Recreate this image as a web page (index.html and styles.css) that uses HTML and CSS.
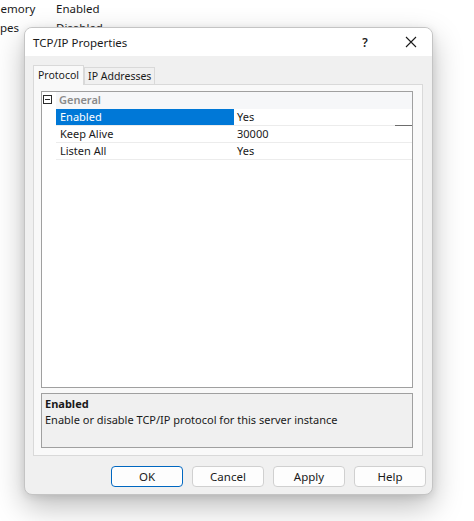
FILE: index.html
```html
<!DOCTYPE html>
<html>
<head>
<meta charset="utf-8">
<link rel="stylesheet" href="styles.css">
</head>
<body>
<div class="desktop">
  <div class="bg-row"><span class="bg-name">Memory</span><span class="bg-val">Enabled</span></div>
  <div class="bg-row"><span class="bg-name">Pipes</span><span class="bg-val">Disabled</span></div>
</div>

<div class="dialog">
  <div class="titlebar">
    <span class="title">TCP/IP Properties</span>
    <span class="tb-help">?</span>
    <span class="tb-close">
      <svg width="12" height="12" viewBox="0 0 12 12"><path d="M1 1 L11 11 M11 1 L1 11" stroke="#1a1a1a" stroke-width="1.1" fill="none"/></svg>
    </span>
  </div>
  <div class="body">
    <div class="tabs">
      <div class="tab active">Protocol</div>
      <div class="tab">IP Addresses</div>
    </div>
    <div class="panel">
      <div class="grid">
        <div class="row cat">
          <div class="margin"><span class="toggle"></span></div>
          <div class="cat-name">General</div>
        </div>
        <div class="row prop selected">
          <div class="margin"></div>
          <div class="pname">Enabled</div>
          <div class="pval">Yes</div>
        </div>
        <div class="row prop">
          <div class="margin"></div>
          <div class="pname">Keep Alive</div>
          <div class="pval">30000</div>
        </div>
        <div class="row prop">
          <div class="margin"></div>
          <div class="pname">Listen All</div>
          <div class="pval">Yes</div>
        </div>
        <div class="stray-line"></div>
      </div>
      <div class="desc">
        <div class="desc-title">Enabled</div>
        <div class="desc-text">Enable or disable TCP/IP protocol for this server instance</div>
      </div>
    </div>
    <div class="buttons">
      <button class="btn default">OK</button>
      <button class="btn">Cancel</button>
      <button class="btn">Apply</button>
      <button class="btn">Help</button>
    </div>
  </div>
</div>
</body>
</html>
```

FILE: styles.css
```css
html, body {
  margin: 0;
  padding: 0;
}
body {
  width: 474px;
  height: 521px;
  overflow: hidden;
  background: #ffffff;
  font-family: "Noto Sans", "Open Sans", sans-serif;
  font-size: 11px;
  color: #1a1a1a;
  position: relative;
}
.bg-row {
  display: flex;
  height: 19px;
  line-height: 17px;
  font-size: 11.5px;
}
.bg-name {
  width: 66px;
  margin-left: -10px;
}
.bg-val {
  flex: none;
}
.dialog {
  position: absolute;
  left: 24px;
  top: 27px;
  width: 409px;
  height: 468px;
  box-sizing: border-box;
  border: 1px solid #c4c4c4;
  border-radius: 8px;
  background: #f0f0f0;
  box-shadow: 0 12px 30px rgba(0, 0, 0, 0.26), 0 2px 8px rgba(0, 0, 0, 0.10);
  display: flex;
  flex-direction: column;
  overflow: hidden;
}
.titlebar {
  height: 28px;
  background: #ffffff;
  display: flex;
  align-items: center;
  padding-left: 8px;
  flex: none;
}
.title {
  flex: 1;
  font-size: 11.5px;
  color: #1a1a1a;
}
.tb-help {
  width: 20px;
  text-align: center;
  font-weight: 600;
  font-size: 12px;
  margin-right: 26px;
}
.tb-close {
  width: 20px;
  margin-right: 11px;
  display: flex;
  align-items: center;
  justify-content: center;
}
.body {
  flex: 1;
  display: flex;
  flex-direction: column;
  padding: 9px 9px 0 8px;
}
.tabs {
  display: flex;
  align-items: flex-end;
  height: 19px;
  position: relative;
  z-index: 1;
}
.tab {
  height: 17px;
  line-height: 16px;
  padding: 0 3px;
  border: 1px solid #d9d9d9;
  border-bottom: none;
  background: #f0f0f0;
  font-size: 10.5px;
  box-sizing: border-box;
}
.tab.active {
  height: 20px;
  line-height: 18px;
  background: #f9f9f9;
  border-color: #d9d9d9;
  margin-bottom: -1px;
  padding: 0 4px;
}
.panel {
  height: 372px;
  box-sizing: border-box;
  border: 1px solid #d9d9d9;
  background: #f9f9f9;
  padding: 6px 9px 6px 7px;
  display: flex;
  flex-direction: column;
  gap: 5px;
}
.grid {
  height: 297px;
  box-sizing: border-box;
  border: 1px solid #a0a0a0;
  background: #ffffff;
  position: relative;
}
.row {
  display: flex;
  height: 17px;
  line-height: 16px;
}
.margin {
  width: 14px;
  flex: none;
  background: #ffffff;
  position: relative;
}
.cat .cat-name {
  flex: 1;
  background: #f6f7f9;
  color: #8a8a8a;
  font-weight: 600;
  padding-left: 3px;
}
.toggle {
  position: absolute;
  left: 1px;
  top: 3px;
  width: 9px;
  height: 9px;
  box-sizing: border-box;
  border: 1px solid #2a2a2a;
  background: #fff;
}
.toggle::after {
  content: "";
  position: absolute;
  left: 1px;
  top: 3px;
  width: 5px;
  height: 1px;
  background: #2a2a2a;
}
.prop .pname {
  width: 178px;
  flex: none;
  padding-left: 4px;
  box-sizing: border-box;
  border-bottom: 1px solid #ececec;
}
.prop .pval {
  flex: 1;
  padding-left: 3px;
  border-bottom: 1px solid #ececec;
}
.prop.selected .pname {
  background: #0078d7;
  color: #ffffff;
}
.stray-line {
  position: absolute;
  right: 0;
  top: 33px;
  width: 17px;
  height: 1px;
  background: #6d6d6d;
}
.desc {
  height: 55px;
  box-sizing: border-box;
  border: 1px solid #a0a0a0;
  background: #f0f0f0;
  padding: 2px 3px;
}
.desc-title {
  font-weight: bold;
  line-height: 16px;
}
.desc-text {
  line-height: 16px;
}
.buttons {
  display: flex;
  justify-content: flex-end;
  gap: 9px;
  padding-top: 10px;
  margin-right: -3px;
}
.btn {
  width: 72px;
  height: 21px;
  box-sizing: border-box;
  border: 1px solid #d0d0d0;
  border-radius: 4px;
  background: #fdfdfd;
  font-family: inherit;
  font-size: 11.5px;
  color: #1a1a1a;
  padding: 0;
}
.btn.default {
  border: 1px solid #0067c0;
  box-shadow: inset 0 0 0 1px #ffffff;
}
```
